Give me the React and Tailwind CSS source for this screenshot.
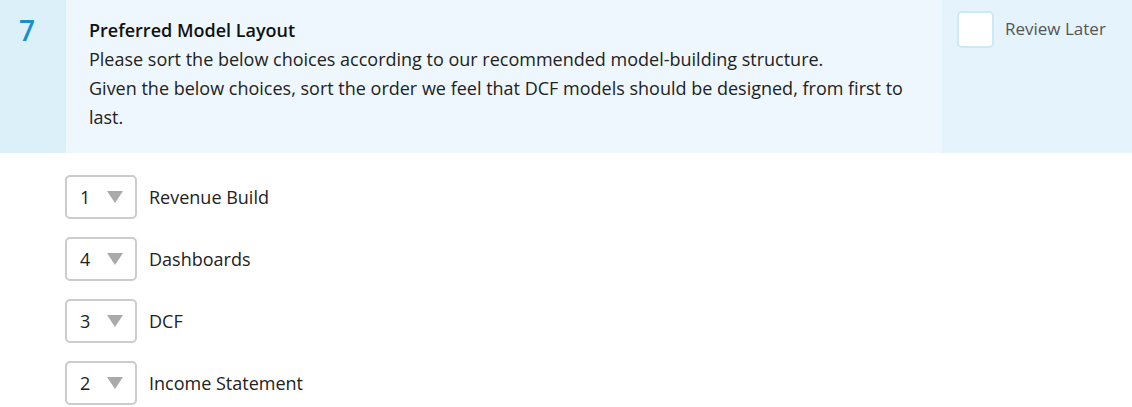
import React from "react";

const options = [
  { n: "1", label: "Revenue Build" },
  { n: "4", label: "Dashboards" },
  { n: "3", label: "DCF" },
  { n: "2", label: "Income Statement" },
];

export default function App() {
  return (
    <div className="w-[1132px] h-[407px] bg-white overflow-hidden" style={{ fontFamily: '"Open Sans", sans-serif' }}>
      <div className="flex h-[153px]">
        <div className="w-[66px] bg-[#dcf0fa] pl-[19px] pt-[11px]">
          <span className="text-[28px] leading-[38px] font-semibold text-[#1a8fd0]">7</span>
        </div>
        <div className="w-[876px] bg-[#eef7fd] px-[23px] pt-[16px] text-[18px] leading-[29px] text-[#222]">
          <div className="font-semibold text-[#111]">Preferred Model Layout</div>
          <div>Please sort the below choices according to our recommended model-building structure.</div>
          <div>Given the below choices, sort the order we feel that DCF models should be designed, from first to last.</div>
        </div>
        <div className="flex-1 bg-[#e4f3fc] pl-[15px] pt-[11px]">
          <div className="flex items-center gap-[11px]">
            <div className="w-[37px] h-[37px] rounded-[5px] border-2 border-[#cde9f8] bg-white" />
            <span className="text-[17px] text-[#555] -mt-[1px]">Review Later</span>
          </div>
        </div>
      </div>
      <div className="flex flex-col gap-[18px] pt-[22px] pl-[65px]">
        {options.map((o) => (
          <div key={o.label} className="flex items-center">
            <div className="w-[72px] h-[44px] border-2 border-[#cccccc] rounded-[5px] bg-white flex items-center pl-[13px]">
              <span className="text-[18px] text-[#222] w-[27px]">{o.n}</span>
              <svg width="16" height="12" viewBox="0 0 16 12">
                <polygon points="0,0 16,0 8,12" fill="#aaaaaa" />
              </svg>
            </div>
            <span className="ml-[12px] text-[18px] text-[#222]">{o.label}</span>
          </div>
        ))}
      </div>
    </div>
  );
}
